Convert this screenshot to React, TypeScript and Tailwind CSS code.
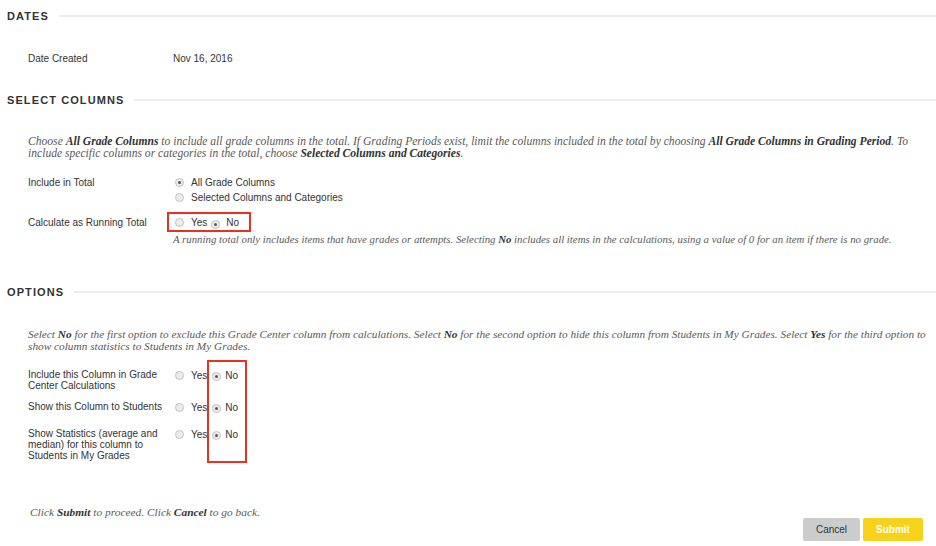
import React from "react"

const serif = { fontFamily: '"Liberation Serif", "DejaVu Serif", serif' }

const Radio = ({ checked = false }: { checked?: boolean }) => (
  <span className="inline-flex h-[9px] w-[9px] shrink-0 items-center justify-center rounded-full border border-[#c2c2c2] bg-[#ececec]">
    {checked && <span className="h-[3px] w-[3px] rounded-full bg-[#555]" />}
  </span>
)

const SectionHeader = ({ title, className = "" }: { title: string; className?: string }) => (
  <div className={`flex h-[14px] items-center pl-[7px] ${className}`}>
    <span className="text-[11px] font-bold tracking-[1.1px] text-[#333]">{title}</span>
    <div className="ml-[10px] h-[2px] flex-1 bg-[#ececec]" />
  </div>
)

const Note = ({ children, className = "" }: { children: React.ReactNode; className?: string }) => (
  <p style={serif} className={`whitespace-nowrap italic leading-[12px] text-[#5a5a5a] ${className}`}>
    {children}
  </p>
)

const B = ({ children }: { children: React.ReactNode }) => <b className="font-bold text-[#333]">{children}</b>

const YesNo = ({ tight = false }: { tight?: boolean }) => (
  <div className="flex items-center">
    <Radio />
    <span className="ml-[7px]">Yes</span>
    <span className={tight ? "ml-[5px]" : "ml-[4px]"}>
      <Radio checked />
    </span>
    <span className={tight ? "ml-[4px]" : "ml-[6px]"}>No</span>
  </div>
)

export default function App() {
  return (
    <div
      className="h-[546px] w-[936px] overflow-hidden bg-white text-[10px] text-[#333]"
      style={{ fontFamily: '"Liberation Sans", Arial, sans-serif' }}
    >
      <SectionHeader title="DATES" className="mt-[9px]" />
      <div className="mt-[29px] flex pl-[28px] leading-[14px]">
        <span className="w-[145px]">Date Created</span>
        <span>Nov 16, 2016</span>
      </div>

      <SectionHeader title="SELECT COLUMNS" className="mt-[27px]" />
      <div className="pl-[28px]">
        <Note className="mt-[29px] text-[11.6px]">
          Choose <B>All Grade Columns</B> to include all grade columns in the total. If Grading Periods exist, limit the
          columns included in the total by choosing <B>All Grade Columns in Grading Period</B>. To
          <br />
          include specific columns or categories in the total, choose <B>Selected Columns and Categories</B>.
        </Note>

        <div className="mt-[15px] flex leading-[15px]">
          <span className="w-[145px]">Include in Total</span>
          <div className="flex flex-col pl-[2px]">
            <div className="flex items-center">
              <Radio checked />
              <span className="ml-[7px]">All Grade Columns</span>
            </div>
            <div className="flex items-center">
              <Radio />
              <span className="ml-[7px]">Selected Columns and Categories</span>
            </div>
          </div>
        </div>

        <div className="mt-[7px] flex items-center">
          <span className="w-[139px]">Calculate as Running Total</span>
          <div className="flex h-[20px] w-[84px] items-center border-2 border-[#e8321e] pl-[6px]">
            <YesNo />
          </div>
        </div>
        <div className="pl-[145px]">
          <Note className="mt-[1px] text-[10.8px]">
            A running total only includes items that have grades or attempts. Selecting <B>No</B> includes all items in the
            calculations, using a value of 0 for an item if there is no grade.
          </Note>
        </div>
      </div>

      <SectionHeader title="OPTIONS" className="mt-[40px]" />
      <div className="pl-[28px]">
        <Note className="mt-[29px] text-[11.3px]">
          Select <B>No</B> for the first option to exclude this Grade Center column from calculations. Select <B>No</B> for
          the second option to hide this column from Students in My Grades. Select <B>Yes</B> for the third option to
          <br />
          show column statistics to Students in My Grades.
        </Note>

        <div className="relative pt-[17px] leading-[11px]">
          <div className="flex">
            <span className="w-[145px]">
              Include this Column in Grade
              <br />
              Center Calculations
            </span>
            <div className="pl-[2px]">
              <YesNo tight />
            </div>
          </div>
          <div className="mt-[10px] flex">
            <span className="w-[145px]">Show this Column to Students</span>
            <div className="pl-[2px]">
              <YesNo tight />
            </div>
          </div>
          <div className="mt-[15px] flex">
            <span className="w-[145px]">
              Show Statistics (average and
              <br />
              median) for this column to
              <br />
              Students in My Grades
            </span>
            <div className="pl-[2px]">
              <YesNo tight />
            </div>
          </div>
          {/* annotation box over the "No" column */}
          <div className="absolute left-[179px] top-[8px] h-[103px] w-[40px] border-2 border-[#e8321e]" />
        </div>
      </div>

      <div className="mt-[45px] flex items-start justify-between pl-[30px] pr-[13px]">
        <Note className="text-[11.4px]">
          Click <B>Submit</B> to proceed. Click <B>Cancel</B> to go back.
        </Note>
        <div className="mt-[12px] flex gap-[3px]">
          <button className="h-[23px] w-[57px] rounded-[2px] bg-[#cccccc] text-[10px] text-[#333]">Cancel</button>
          <button className="h-[23px] w-[60px] rounded-[2px] bg-[#f7d21b] text-[10px] font-bold text-white">Submit</button>
        </div>
      </div>
    </div>
  )
}
